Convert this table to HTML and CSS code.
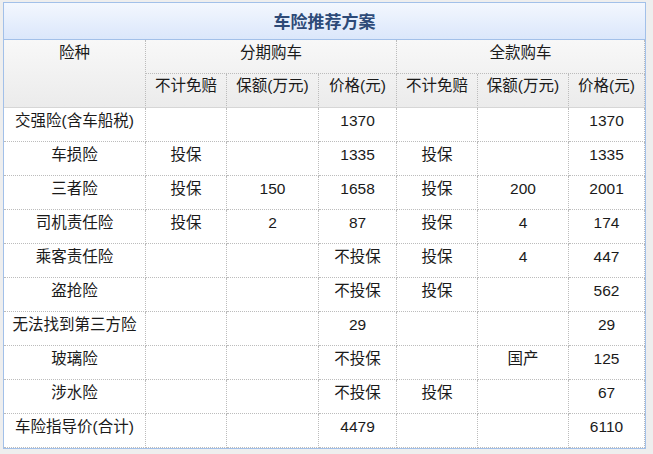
FILE: index.html
```html
<!DOCTYPE html>
<html lang="zh-CN">
<head>
<meta charset="utf-8">
<title>车险推荐方案</title>
<link rel="stylesheet" href="styles.css">
</head>
<body>
<div class="panel">
  <div class="title">车险推荐方案</div>
  <table class="plan">
    <colgroup>
      <col class="c1"><col class="c2"><col class="c3"><col class="c4"><col class="c5"><col class="c6"><col class="c7">
    </colgroup>
    <thead>
      <tr class="h1">
        <th rowspan="2" class="kind">险种</th>
        <th colspan="3">分期购车</th>
        <th colspan="3">全款购车</th>
      </tr>
      <tr class="h2">
        <th>不计免赔</th><th>保额(万元)</th><th>价格(元)</th>
        <th>不计免赔</th><th>保额(万元)</th><th>价格(元)</th>
      </tr>
    </thead>
    <tbody>
      <tr><td>交强险(含车船税)</td><td></td><td></td><td>1370</td><td></td><td></td><td>1370</td></tr>
      <tr><td>车损险</td><td>投保</td><td></td><td>1335</td><td>投保</td><td></td><td>1335</td></tr>
      <tr><td>三者险</td><td>投保</td><td>150</td><td>1658</td><td>投保</td><td>200</td><td>2001</td></tr>
      <tr><td>司机责任险</td><td>投保</td><td>2</td><td>87</td><td>投保</td><td>4</td><td>174</td></tr>
      <tr><td>乘客责任险</td><td></td><td></td><td>不投保</td><td>投保</td><td>4</td><td>447</td></tr>
      <tr><td>盗抢险</td><td></td><td></td><td>不投保</td><td>投保</td><td></td><td>562</td></tr>
      <tr><td>无法找到第三方险</td><td></td><td></td><td>29</td><td></td><td></td><td>29</td></tr>
      <tr><td>玻璃险</td><td></td><td></td><td>不投保</td><td></td><td>国产</td><td>125</td></tr>
      <tr><td>涉水险</td><td></td><td></td><td>不投保</td><td>投保</td><td></td><td>67</td></tr>
      <tr><td>车险指导价(合计)</td><td></td><td></td><td>4479</td><td></td><td></td><td>6110</td></tr>
    </tbody>
  </table>
</div>
</body>
</html>
```

FILE: styles.css
```css
html, body {
  background: #eeeeee;
}
body {
  margin: 2px 0 0 3px;
  font-family: "Liberation Sans", "Noto Sans CJK SC", sans-serif;
  font-size: 15.5px;
  color: #1a1a1a;
}
.panel {
  width: 641px;
  border: 1px solid #a2c0e9;
  background: #ffffff;
}
.title {
  height: 35px;
  padding-bottom: 1px;
  border-bottom: 1px solid #a2c0e9;
  background: linear-gradient(#f3f7fe, #dbe7fb);
  display: flex;
  align-items: center;
  justify-content: center;
  font-size: 17px;
  font-weight: bold;
  color: #2d4a78;
}
.plan {
  width: 641px;
  table-layout: fixed;
  border-collapse: separate;
  border-spacing: 0;
}
.c1 { width: 142px; }
.c2 { width: 81px; }
.c3 { width: 92px; }
.c4 { width: 78px; }
.c5 { width: 81px; }
.c6 { width: 91px; }
.c7 { width: 76px; }
.plan th,
.plan td {
  box-sizing: border-box;
  height: 34px;
  padding: 2px 0 0 0;
  line-height: 22px;
  text-align: center;
  vertical-align: top;
  white-space: nowrap;
  border-right: 1px dotted #bcbcbc;
  border-bottom: 1px dotted #bcbcbc;
  font-weight: normal;
}
.plan thead {
  background: linear-gradient(#f8f8f8, #ebebeb);
}
.plan .h1 th {
  padding-top: 2px;
}
.plan .h2 th {
  padding-top: 1px;
  border-bottom: 1px solid #d6d6d6;
}
.plan th.kind {
  border-bottom: 1px solid #d6d6d6;
}
.plan td {
  color: #1a1a1a;
}
```
